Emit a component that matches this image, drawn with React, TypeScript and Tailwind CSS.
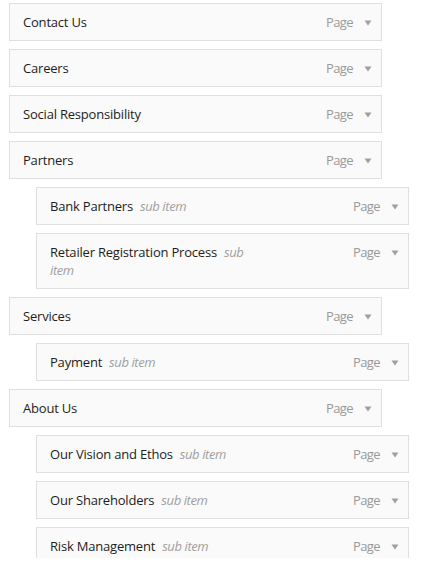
type Item = { title: string; sub?: boolean };

const items: Item[] = [
  { title: "Contact Us" },
  { title: "Careers" },
  { title: "Social Responsibility" },
  { title: "Partners" },
  { title: "Bank Partners", sub: true },
  { title: "Retailer Registration Process", sub: true },
  { title: "Services" },
  { title: "Payment", sub: true },
  { title: "About Us" },
  { title: "Our Vision and Ethos", sub: true },
  { title: "Our Shareholders", sub: true },
  { title: "Risk Management", sub: true },
];

const Arrow = () => (
  <svg width="8" height="6" viewBox="0 0 8 6" className="mt-[7px] ml-[11px]">
    <path d="M0.5 0.5 L7.5 0.5 L4 5.5 Z" fill="#a0a0a0" />
  </svg>
);

const MenuItem = ({ item }: { item: Item }) => (
  <div
    className={`${item.sub ? "ml-[36px]" : "ml-[9px]"} w-[373px] mb-[8px] flex items-start justify-between border border-[#dfdfdf] bg-[#fafafa] pl-[13px] pr-[9px] py-[9px] text-[13px] leading-[18px]`}
  >
    <div className="w-[205px] font-medium tracking-[-0.2px] text-[#1d1d1d]">
      {item.title}
      {item.sub && (
        <span className="ml-[7px] font-normal italic tracking-[-0.4px] text-[#a0a0a0]">
          sub item
        </span>
      )}
    </div>
    <div className="flex items-start tracking-[-0.6px] text-[#999]">
      <span>Page</span>
      <Arrow />
    </div>
  </div>
);

export default function App() {
  return (
    <div
      className="h-[558px] overflow-hidden bg-white pt-[3px]"
      style={{ fontFamily: '"Open Sans", "Noto Sans", sans-serif' }}
    >
      {items.map((it) => (
        <MenuItem key={it.title} item={it} />
      ))}
    </div>
  );
}
